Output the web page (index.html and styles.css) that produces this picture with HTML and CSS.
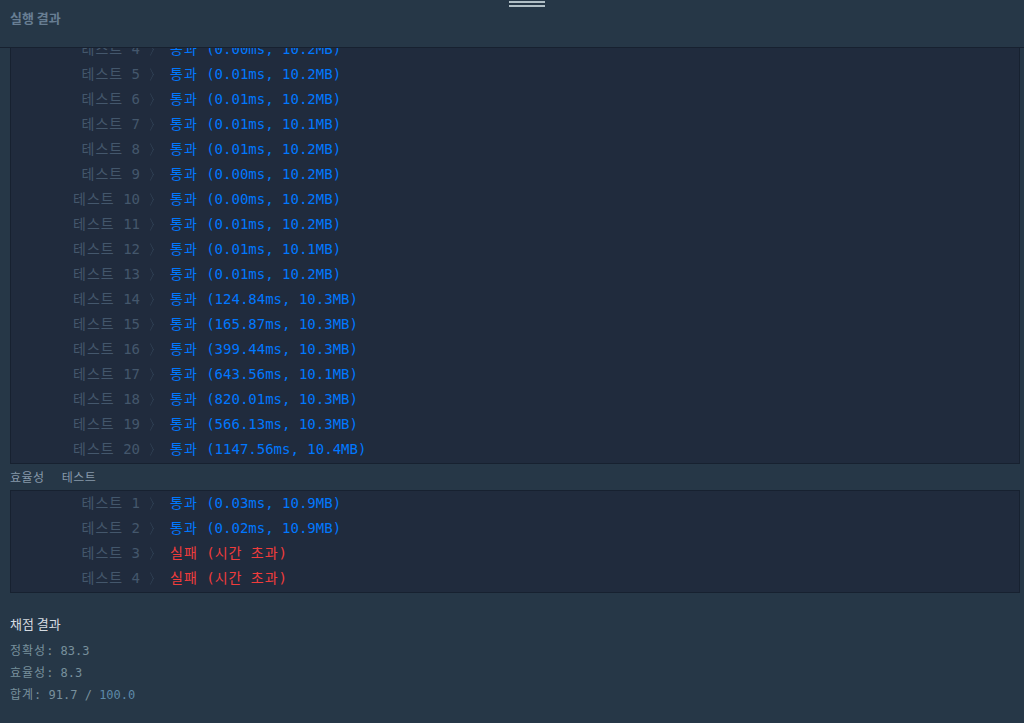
FILE: index.html
```html
<!DOCTYPE html>
<html>
<head>
<meta charset="utf-8">
<link rel="stylesheet" href="styles.css">
</head>
<body>
<header class="panel-head">
	<div class="grip"><span></span><span></span></div>
	<h2>실행 결과</h2>
</header>
<main class="panel-body">
	<div class="console">
		<div class="row"><span class="label"><i>테스트</i> 1</span><span class="arrow"></span><span class="pass"><i>통과</i> (0.01ms, 10.2MB)</span></div>
		<div class="row"><span class="label"><i>테스트</i> 2</span><span class="arrow"></span><span class="pass"><i>통과</i> (0.01ms, 10.1MB)</span></div>
		<div class="row"><span class="label"><i>테스트</i> 3</span><span class="arrow"></span><span class="pass"><i>통과</i> (0.01ms, 10.2MB)</span></div>
		<div class="row"><span class="label"><i>테스트</i> 4</span><span class="arrow"></span><span class="pass"><i>통과</i> (0.00ms, 10.2MB)</span></div>
		<div class="row"><span class="label"><i>테스트</i> 5</span><span class="arrow"></span><span class="pass"><i>통과</i> (0.01ms, 10.2MB)</span></div>
		<div class="row"><span class="label"><i>테스트</i> 6</span><span class="arrow"></span><span class="pass"><i>통과</i> (0.01ms, 10.2MB)</span></div>
		<div class="row"><span class="label"><i>테스트</i> 7</span><span class="arrow"></span><span class="pass"><i>통과</i> (0.01ms, 10.1MB)</span></div>
		<div class="row"><span class="label"><i>테스트</i> 8</span><span class="arrow"></span><span class="pass"><i>통과</i> (0.01ms, 10.2MB)</span></div>
		<div class="row"><span class="label"><i>테스트</i> 9</span><span class="arrow"></span><span class="pass"><i>통과</i> (0.00ms, 10.2MB)</span></div>
		<div class="row"><span class="label"><i>테스트</i> 10</span><span class="arrow"></span><span class="pass"><i>통과</i> (0.00ms, 10.2MB)</span></div>
		<div class="row"><span class="label"><i>테스트</i> 11</span><span class="arrow"></span><span class="pass"><i>통과</i> (0.01ms, 10.2MB)</span></div>
		<div class="row"><span class="label"><i>테스트</i> 12</span><span class="arrow"></span><span class="pass"><i>통과</i> (0.01ms, 10.1MB)</span></div>
		<div class="row"><span class="label"><i>테스트</i> 13</span><span class="arrow"></span><span class="pass"><i>통과</i> (0.01ms, 10.2MB)</span></div>
		<div class="row"><span class="label"><i>테스트</i> 14</span><span class="arrow"></span><span class="pass"><i>통과</i> (124.84ms, 10.3MB)</span></div>
		<div class="row"><span class="label"><i>테스트</i> 15</span><span class="arrow"></span><span class="pass"><i>통과</i> (165.87ms, 10.3MB)</span></div>
		<div class="row"><span class="label"><i>테스트</i> 16</span><span class="arrow"></span><span class="pass"><i>통과</i> (399.44ms, 10.3MB)</span></div>
		<div class="row"><span class="label"><i>테스트</i> 17</span><span class="arrow"></span><span class="pass"><i>통과</i> (643.56ms, 10.1MB)</span></div>
		<div class="row"><span class="label"><i>테스트</i> 18</span><span class="arrow"></span><span class="pass"><i>통과</i> (820.01ms, 10.3MB)</span></div>
		<div class="row"><span class="label"><i>테스트</i> 19</span><span class="arrow"></span><span class="pass"><i>통과</i> (566.13ms, 10.3MB)</span></div>
		<div class="row"><span class="label"><i>테스트</i> 20</span><span class="arrow"></span><span class="pass"><i>통과</i> (1147.56ms, 10.4MB)</span></div>
	</div>
	<div class="group-title"><span>효율성</span><span>테스트</span></div>
	<div class="console">
		<div class="row"><span class="label"><i>테스트</i> 1</span><span class="arrow"></span><span class="pass"><i>통과</i> (0.03ms, 10.9MB)</span></div>
		<div class="row"><span class="label"><i>테스트</i> 2</span><span class="arrow"></span><span class="pass"><i>통과</i> (0.02ms, 10.9MB)</span></div>
		<div class="row"><span class="label"><i>테스트</i> 3</span><span class="arrow"></span><span class="fail"><i>실패</i> (<i>시간</i> <i>초과</i>)</span></div>
		<div class="row"><span class="label"><i>테스트</i> 4</span><span class="arrow"></span><span class="fail"><i>실패</i> (<i>시간</i> <i>초과</i>)</span></div>
	</div>
	<div class="score">
		<h3>채점 결과</h3>
		<p><i>정확성</i>: 83.3</p>
		<p><i>효율성</i>: 8.3</p>
		<p><i>합계</i>: 91.7 / <span class="total">100.0</span></p>
	</div>
</main>
</body>
</html>
```

FILE: styles.css
```css
html, body
{
	margin: 0;
	height: 100%;
}

body
{
	background: #263747;
	font-family: "DejaVu Sans Mono", "Noto Sans CJK KR", monospace;
	overflow: hidden;
	position: relative;
}

/* hangul runs a bit wider in the mono console */
i
{
	font-style: normal;
	letter-spacing: 1px;
}

/* header stays on top of the scrolled output */
.panel-head
{
	position: absolute;
	top: 0;
	left: 0;
	right: 0;
	height: 47px;
	background: #263747;
	border-bottom: 1px solid #172130;
	z-index: 2;
}

.panel-head h2
{
	margin: 0;
	padding: 8px 10px 0;
	font-family: "Noto Sans CJK KR", sans-serif;
	font-size: 13px;
	line-height: 20px;
	font-weight: bold;
	color: #687e93;
}

.grip
{
	position: absolute;
	top: 1px;
	left: 509px;
	width: 36px;
}

.grip span
{
	display: block;
	height: 2px;
	margin-bottom: 2px;
	background: #b0bec5;
}

/* output is scrolled down a little */
.panel-body
{
	margin-top: -39px;
}

.console
{
	margin: 0 4px 0 10px;
	padding-bottom: 1px;
	background: #202b3d;
	border: 1px solid #172130;
}

.row
{
	display: flex;
	height: 25px;
	line-height: 25px;
	font-size: 14px;
	white-space: pre;
}

.label
{
	width: 129px;
	text-align: right;
	color: #44576c;
}

.arrow
{
	width: 30px;
	position: relative;
}

.arrow::before
{
	content: "";
	position: absolute;
	left: 6px;
	top: 8px;
	width: 8px;
	height: 8px;
	border-top: 1px solid #34465a;
	border-right: 1px solid #34465a;
	transform: scaleX(0.5) rotate(45deg);
}

.pass
{
	color: #0078ff;
}

.fail
{
	color: #f03c3c;
}

.group-title
{
	display: flex;
	gap: 17px;
	padding: 0 10px;
	height: 26px;
	line-height: 25px;
	font-family: "Noto Sans CJK KR", sans-serif;
	font-size: 12px;
	color: #8799aa;
}

.group-title span
{
	letter-spacing: 0.5px;
}

.score
{
	padding: 20px 10px 0;
}

.score h3
{
	margin: 0 0 5px;
	font-family: "Noto Sans CJK KR", sans-serif;
	font-weight: normal;
	font-size: 13px;
	line-height: 22px;
	color: #d5dbe1;
}

.score p
{
	margin: 0;
	font-size: 12px;
	line-height: 22px;
	color: #78909c;
}

.score .total
{
	color: #5d89a8;
}
```
